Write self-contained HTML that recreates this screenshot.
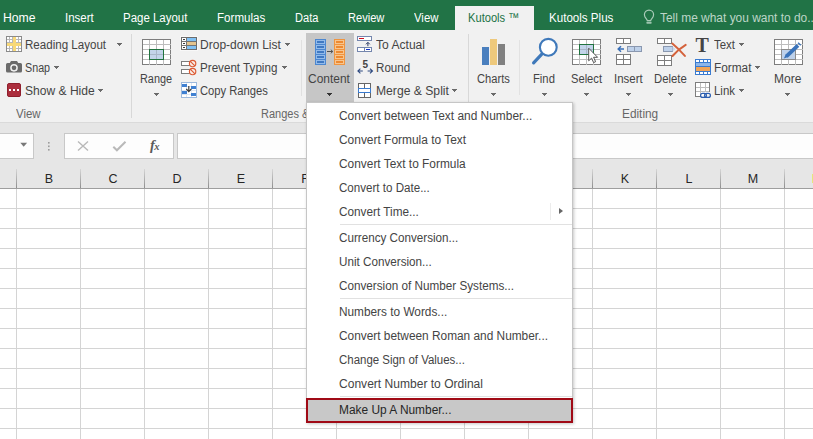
<!DOCTYPE html>
<html><head><meta charset="utf-8"><title>Kutools Content menu</title>
<style>
html,body{margin:0;padding:0;}
body{width:813px;height:439px;overflow:hidden;position:relative;background:#fff;font-family:"Liberation Sans",sans-serif;}
.a{position:absolute;}
.t{position:absolute;white-space:nowrap;transform-origin:0 50%;}
#tabs{left:0;top:0;width:813px;height:30px;background:#217346;}
#atab{left:455px;top:6px;width:79px;height:24px;background:#f1f1f1;}
#ribbon{left:0;top:30px;width:813px;height:92px;background:#f1f1f1;}
#band{left:0;top:123px;width:813px;height:66px;background:#e6e6e6;}
#rline{left:0;top:122px;width:813px;height:1px;background:#dadada;}
.box{background:#fdfdfd;border:1px solid #c8c8c8;box-sizing:border-box;top:133px;height:26px;}
.vs{width:1px;background:#d8d8d8;}
.hs{width:1px;background:linear-gradient(to bottom,#d6d6d6,#8e8e8e);top:169px;height:19px;}
#hline{left:0;top:188px;width:813px;height:1px;background:#9e9e9e;}
#grid{left:0;top:189px;width:813px;height:250px;background:#fff;
 background-image:linear-gradient(to right,#d4d4d4 1px,transparent 1px),linear-gradient(to bottom,#d4d4d4 1px,transparent 1px);
 background-size:64px 20px,64px 20px;background-position:16px 0,0 19px;}
.ar{width:0;height:0;border-left:2.5px solid transparent;border-right:2.5px solid transparent;border-top:3px solid #666;}
#pressed{left:306px;top:33px;width:48px;height:70px;background:#c6c6c6;}
#menu{left:306px;top:102px;width:267px;height:321px;background:#fff;border:1px solid #c6c6c6;border-bottom:none;box-sizing:border-box;box-shadow:1px 1px 3px rgba(0,0,0,.22);}
.ms{left:340px;width:232px;height:1px;background:#e1e1e1;}
#hl{left:306px;top:398px;width:267px;height:25px;background:#c8c8c8;border:2px solid #a00a16;box-sizing:border-box;}
</style></head><body>
<div class="a" id="tabs"></div>
<div class="a" id="atab"></div>
<div class="a" id="ribbon"></div>
<div class="a" id="rline"></div>
<div class="a" id="band"></div>
<div class="a" id="pressed"></div>
<!-- group separators -->
<div class="a vs" style="left:131px;top:34px;height:84px"></div>
<div class="a vs" style="left:301px;top:40px;height:56px;background:#e0e0e0"></div>
<div class="a vs" style="left:468px;top:34px;height:84px"></div>
<div class="a vs" style="left:519px;top:40px;height:55px;background:#e2e2e2"></div>
<!-- formula bar -->
<div class="a box" style="left:-2px;width:36px"></div>
<div class="a box" style="left:64px;width:110px"></div>
<div class="a box" style="left:177px;width:640px"></div>
<div class="a hs" style="left:16px"></div><div class="a hs" style="left:80px"></div><div class="a hs" style="left:144px"></div><div class="a hs" style="left:208px"></div><div class="a hs" style="left:272px"></div><div class="a hs" style="left:336px"></div><div class="a hs" style="left:400px"></div><div class="a hs" style="left:464px"></div><div class="a hs" style="left:528px"></div><div class="a hs" style="left:592px"></div><div class="a hs" style="left:656px"></div><div class="a hs" style="left:720px"></div><div class="a hs" style="left:784px"></div>
<div class="a" id="hline"></div>
<div class="a" style="left:812px;top:174px;width:1px;height:9px;background:#e6e67c"></div>
<div class="a" id="grid"></div>
<svg class="a" style="left:0;top:0" width="813" height="190" viewBox="0 0 813 190">
<defs>
<path id="dar" d="M0 0h5v1h-1v1h-1v1h-1v-1h-1v-1h-1z" fill="#6a6a6a" shape-rendering="crispEdges"/>
</defs>
<!-- lightbulb -->
<g fill="none" stroke="#a9cbb8" stroke-width="1.200">
<path d="M647.300 20.600c-.3-1.600-2.900-3.100-2.900-5.900a4.600 4.600 0 0 1 9.200 0c0 2.800-2.600 4.300-2.900 5.900z"/>
</g>
<rect x="646.400" y="21.700" width="5.200" height="2" rx=".6" fill="#9dc4ae"/>
<!-- Reading layout -->
<g shape-rendering="crispEdges">
<rect x="6.500" y="36.500" width="15" height="15" fill="#fff" stroke="#8a8a8a"/>
<path d="M9.500 37v14M12.500 37v14M15.500 37v14M18.500 37v14M7 39.500h14M7 42.500h14M7 45.500h14M7 48.500h14" stroke="#b8b8b8" fill="none"/>
<rect x="13" y="37" width="3" height="14" fill="#f8d978"/>
<rect x="7" y="43" width="14" height="3" fill="#f8d978"/>
</g>
<!-- camera -->
<path d="M7.500 63h2.300l1.200-2h6l1.200 2h2.300q1.500 0 1.500 1.500v6.500q0 1.500-1.500 1.500h-13q-1.500 0-1.500-1.500v-6.500q0-1.500 1.500-1.500z" fill="#6b6b6b"/>
<circle cx="14" cy="67.800" r="3.100" fill="#6b6b6b" stroke="#f1f1f1" stroke-width="1.500"/>
<!-- show hide -->
<rect x="7.500" y="83.500" width="13" height="13" rx="1.500" fill="#ab2e3d" stroke="#8f1f2d"/>
<g fill="#fff"><rect x="9" y="89" width="2" height="2"/><rect x="13" y="89" width="2" height="2"/><rect x="17" y="89" width="2" height="2"/></g>
<!-- Range icon -->
<g shape-rendering="crispEdges">
<rect x="142.500" y="39.500" width="28" height="25" fill="#fff" stroke="#7d7d7d"/>
<path d="M149.500 40v25M156.500 40v25M163.500 40v25M143 44.500h28M143 49.500h28M143 54.500h28M143 59.500h28" stroke="#bdbdbd" fill="none"/>
</g>
<g shape-rendering="crispEdges"><rect x="149.500" y="49.500" width="14" height="10" fill="#c3d4ea" stroke="#21733f"/>
<path d="M156.500 50v9M150 54.500h13" stroke="#a8b6c9" fill="none"/></g>
<!-- drop-down list -->
<g shape-rendering="crispEdges">
<rect x="180.500" y="36.500" width="17" height="14" fill="none" stroke="#f8f8f8"/>
<rect x="181.500" y="37.500" width="15" height="12" fill="#fff" stroke="#6c6c6c"/>
<rect x="187" y="38" width="9" height="3" fill="#80c1f5"/>
<rect x="187" y="42" width="9" height="3" fill="#e4c48e"/>
<rect x="187" y="46" width="9" height="3" fill="#80c1f5"/>
<path d="M186.500 38v11M182 41.500h14M182 45.500h14" stroke="#747474" fill="none"/>
<path d="M183 39.500h2M183 43.500h2M183 47.500h2" stroke="#3c3c3c" fill="none"/>
</g>
<!-- prevent typing -->
<g shape-rendering="crispEdges" fill="#fff" stroke="#7d7d7d">
<rect x="181.500" y="61.500" width="8" height="4"/>
<rect x="181.500" y="69.500" width="8" height="4"/>
</g>
<g fill="#f8ebe6" stroke="#dc5a33" stroke-width="1.150">
<circle cx="192.600" cy="63.600" r="3.200"/><circle cx="192.600" cy="71.500" r="3.200"/>
<path d="M190.300 61.300l4.600 4.600M190.300 69.200l4.600 4.600"/>
</g>
<!-- copy ranges -->
<g shape-rendering="crispEdges">
<rect x="181.500" y="82.500" width="15" height="15" fill="#fff" stroke="#9db9dc"/>
<path d="M182 86.500h14M182 90.500h14M182 94.500h14M186.500 83v14M191.500 83v14" stroke="#dfe6f0" fill="none"/>
<g fill="#3f80d2"><rect x="182" y="84" width="5" height="3"/><rect x="191" y="86" width="5" height="3"/><rect x="182" y="91" width="5" height="3"/><rect x="191" y="93" width="5" height="3"/></g>
</g>
<path d="M188.800 86v5.500M186.300 89l2.500 2.600 2.500-2.600" stroke="#3a3a3a" stroke-width="1.200" fill="none"/>
<!-- Content icon -->
<g shape-rendering="crispEdges">
<rect x="315" y="39" width="11" height="26" fill="#4c87d0"/>
<rect x="334" y="39" width="11" height="26" fill="#f0953f"/>
<g fill="#4079c2" stroke="#93bbea"><rect x="316.500" y="40.5" width="8" height="3"/><rect x="316.500" y="45.5" width="8" height="3"/><rect x="316.500" y="50.5" width="8" height="3"/><rect x="316.500" y="55.5" width="8" height="3"/><rect x="316.500" y="60.5" width="8" height="3"/></g>
<g fill="#ec8a33" stroke="#f8c58e"><rect x="335.500" y="40.5" width="8" height="3"/><rect x="335.500" y="45.5" width="8" height="3"/><rect x="335.500" y="50.5" width="8" height="3"/><rect x="335.500" y="55.5" width="8" height="3"/><rect x="335.500" y="60.5" width="8" height="3"/></g>
</g>
<path d="M327 51.500h5.500M330.800 49.700l2 1.800-2 1.800" stroke="#505050" fill="none" stroke-width="1"/>
<!-- To Actual -->
<g shape-rendering="crispEdges">
<rect x="357.500" y="36.500" width="14" height="4" fill="#fff" stroke="#7486ad"/>
<rect x="357.500" y="47.500" width="14" height="4" fill="#fff" stroke="#7486ad"/>
<path d="M364.500 48v4" stroke="#7486ad"/>
<path d="M359 38.500h5" stroke="#d01020"/>
<path d="M366 49.500h4" stroke="#1030c8"/>
</g>
<path d="M367.900 46.200v-3.600M366 44.300l1.900-2 1.900 2" stroke="#2c3c66" fill="none" stroke-width="1"/>
<!-- Round : arrows -->
<g stroke="#2f4a80" fill="none" stroke-width="1.100">
<path d="M358 71h4.800M360.400 68.600l-2.500 2.400 2.500 2.400"/>
<path d="M367.600 71h4.800M370 68.600l2.500 2.400-2.500 2.400"/>
</g>
<!-- Merge & split -->
<g shape-rendering="crispEdges">
<rect x="358.500" y="83.500" width="12" height="14" fill="#fff" stroke="#666"/>
<path d="M364.500 84v4M364.500 93v4" stroke="#666"/>
<rect x="358.500" y="88.500" width="12" height="4" fill="#fff" stroke="#3a7bd0"/>
</g>
<!-- Charts -->
<g shape-rendering="crispEdges">
<rect x="482" y="47" width="7" height="18" fill="#4a7fbe"/>
<rect x="490" y="39" width="7" height="26" fill="#eec97c"/>
<rect x="498" y="44" width="7" height="21" fill="#808080"/>
</g>
<!-- Find -->
<path d="M541.800 54.200L533.600 62.800" stroke="#3f79ba" stroke-width="3.200" stroke-linecap="round"/>
<circle cx="548.300" cy="47.300" r="8.400" fill="#fff" stroke="#3f79ba" stroke-width="2.100"/>
<!-- Select -->
<g shape-rendering="crispEdges">
<rect x="572.500" y="39.500" width="28" height="25" fill="#fff" stroke="#7d7d7d"/>
<path d="M579.500 40v25M586.500 40v25M593.500 40v25M573 44.500h28M573 49.500h28M573 54.500h28M573 59.500h28" stroke="#bdbdbd" fill="none"/>
</g>
<g shape-rendering="crispEdges"><rect x="579.500" y="44.500" width="14" height="10" fill="#c3d4ea" stroke="#21733f"/>
<path d="M586.500 45v9M580 49.500h13" stroke="#a8b6c9" fill="none"/></g>
<path d="M588.700 48.200v12.600l2.900-2.700 2 4.500 2-.9-2-4.400h4z" fill="#fff" stroke="#555" stroke-width="1" stroke-linejoin="round"/>
<!-- Insert -->
<g shape-rendering="crispEdges" fill="#fff" stroke="#7d7d7d">
<rect x="616.500" y="38.500" width="14" height="5"/>
<path d="M623.500 39v5"/>
<rect x="616.500" y="54.500" width="14" height="10"/>
<path d="M623.500 55v10M617 59.500h14"/>
<rect x="627.500" y="46.500" width="14" height="5" fill="#bed1ea" stroke="#8a98b0"/>
<path d="M634.500 47v5" stroke="#8a98b0"/>
</g>
<path d="M618.300 49h5.700M621 46.300l-2.800 2.700 2.800 2.700" stroke="#3a70b8" fill="none" stroke-width="1.500"/>
<!-- Delete -->
<g shape-rendering="crispEdges" fill="#fff" stroke="#7d7d7d">
<rect x="657.500" y="38.500" width="14" height="5"/>
<path d="M664.500 39v5"/>
<rect x="657.500" y="55.500" width="14" height="10"/>
<path d="M664.500 56v10M658 60.500h14"/>
<rect x="663.500" y="46.500" width="9" height="5" fill="#bed1ea" stroke="#8a98b0"/>
</g>
<path d="M672.500 46.500l3 2.500-3 2.500z" fill="#c9d8ec"/>
<path d="M672.300 43.600q6 5 12.600 12.300M685.700 44.900q-7.500 4.500-13.200 11.100" stroke="#d4623c" stroke-width="2" fill="none" stroke-linecap="round"/>
<!-- Format -->
<g shape-rendering="crispEdges">
<rect x="695.500" y="59.500" width="15" height="15" fill="#fff" stroke="#3a7bd0"/>
<rect x="696" y="63" width="14" height="4" fill="#8db6ea"/>
<rect x="696" y="67" width="14" height="4" fill="#f2a456"/>
<path d="M696 62.500h14M696 71.500h14M696 66.500h14" stroke="#3a7bd0" stroke-width="1" fill="none"/>
<path d="M699.500 60v2M703.500 60v2M707.500 60v2M699.500 72v2M703.500 72v2M707.500 72v2" stroke="#3a7bd0" fill="none"/>
</g>
<!-- Link -->
<g shape-rendering="crispEdges">
<path d="M709.500 92v-9.500h-14v14h5" fill="#fff" stroke="#7d7d7d"/>
<rect x="696" y="83" width="13" height="9" fill="#fff"/>
<rect x="696" y="92" width="4" height="4" fill="#fff"/>
<path d="M700.500 83v13M705.500 83v9M696 87.500h13M696 91.500h13" stroke="#bdbdbd" fill="none"/>
</g>
<g fill="none" stroke="#2a5db0" stroke-width="1.200">
<rect x="700.600" y="93.400" width="5.800" height="4" rx="2"/>
<rect x="704.600" y="93.400" width="5.800" height="4" rx="2"/>
</g>
<!-- More -->
<g shape-rendering="crispEdges">
<rect x="774.500" y="39.500" width="28" height="25" fill="#fff" stroke="#7d7d7d"/>
<path d="M781.500 40v25M788.500 40v25M795.500 40v25M775 44.500h28M775 49.500h28M775 54.500h28M775 59.500h28" stroke="#bdbdbd" fill="none"/>
<rect x="781.500" y="49.500" width="14" height="10" fill="#bed1ea" stroke="#8c8c8c"/>
</g>
<path d="M798 45.300L786.400 56.400" stroke="#3a73ba" stroke-width="3.800"/>
<path d="M799.900 43.500l-1 1" stroke="#3a73ba" stroke-width="3.800"/>
<path d="M785.700 54.500l-1.900 4 4.300-1.500z" fill="#3a73ba"/>
<!-- drop arrows -->
<use href="#dar" x="117" y="43"/>
<use href="#dar" x="54" y="66"/>
<use href="#dar" x="98" y="89"/>
<use href="#dar" x="285" y="43"/>
<use href="#dar" x="282" y="66"/>
<use href="#dar" x="452" y="89"/>
<use href="#dar" x="739" y="43"/>
<use href="#dar" x="755" y="66"/>
<use href="#dar" x="739" y="89"/>
<use href="#dar" x="154" y="93"/>
<path d="M327 93h5v1h-1v1h-1v1h-1v-1h-1v-1h-1z" fill="#333" shape-rendering="crispEdges"/>
<use href="#dar" x="491" y="93"/>
<use href="#dar" x="542" y="93"/>
<use href="#dar" x="584" y="93"/>
<use href="#dar" x="626" y="93"/>
<use href="#dar" x="668" y="93"/>
<use href="#dar" x="785" y="93"/>
<!-- name box arrow -->
<path d="M20.300 142.700h6.800l-3.400 4.100z" fill="#787878"/>
<!-- dots -->
<g fill="#9c9c9c"><rect x="48" y="142" width="1.600" height="1.600"/><rect x="48" y="145.500" width="1.600" height="1.600"/><rect x="48" y="149" width="1.600" height="1.600"/></g>
<!-- X, check -->
<path d="M78 141.500l10 9M88 141.500l-10 9" stroke="#b9b9b9" stroke-width="1.400" fill="none"/>
<path d="M113.300 146.800l3.600 3.500 8.600-8.600" stroke="#b9b9b9" stroke-width="2" fill="none"/>
</svg>

<span class="t" style="left:695.5px;top:34px;font-family:'Liberation Serif',serif;font-weight:bold;font-size:20px;line-height:22px;color:#444;">T</span>
<span class="t" style="left:362.6px;top:59px;font-weight:bold;font-size:10px;line-height:12px;color:#444;">5</span>
<span class="t" style="left:150px;top:137px;font-family:'Liberation Serif',serif;font-style:italic;font-weight:bold;font-size:14.5px;line-height:16px;color:#5a5a5a;letter-spacing:-0.5px">f<span style="font-size:10.5px">x</span></span>
<span class="t" id="t0" style="font-size:12.5px;line-height:16px;color:#fff;top:10.00px;left:3.30px;transform:scaleX(0.9777);">Home</span>
<span class="t" id="t1" style="font-size:12.5px;line-height:16px;color:#fff;top:10.00px;left:64.60px;transform:scaleX(0.9179);">Insert</span>
<span class="t" id="t2" style="font-size:12.5px;line-height:16px;color:#fff;top:10.00px;left:122.90px;transform:scaleX(0.9173);">Page Layout</span>
<span class="t" id="t3" style="font-size:12.5px;line-height:16px;color:#fff;top:10.00px;left:217.30px;transform:scaleX(0.9272);">Formulas</span>
<span class="t" id="t4" style="font-size:12.5px;line-height:16px;color:#fff;top:10.00px;left:294.90px;transform:scaleX(0.8862);">Data</span>
<span class="t" id="t5" style="font-size:12.5px;line-height:16px;color:#fff;top:10.00px;left:348.30px;transform:scaleX(0.8854);">Review</span>
<span class="t" id="t6" style="font-size:12.5px;line-height:16px;color:#fff;top:10.00px;left:413.90px;transform:scaleX(0.9079);">View</span>
<span class="t" id="t7" style="font-size:12.5px;line-height:16px;color:#217346;top:10.00px;left:467.90px;transform:scaleX(0.8912);">Kutools ™</span>
<span class="t" id="t8" style="font-size:12.5px;line-height:16px;color:#fff;top:10.00px;left:548.90px;transform:scaleX(0.9268);">Kutools Plus</span>
<span class="t" id="t9" style="font-size:12.5px;line-height:16px;color:#bdd6c8;top:10.00px;left:660.00px;transform:scaleX(0.9546);">Tell me what you want to do...</span>
<span class="t" id="t10" style="font-size:12.5px;line-height:16px;color:#444;top:37.00px;left:25.10px;transform:scaleX(0.9260);">Reading Layout</span>
<span class="t" id="t11" style="font-size:12.5px;line-height:16px;color:#444;top:60.00px;left:25.10px;transform:scaleX(0.8595);">Snap</span>
<span class="t" id="t12" style="font-size:12.5px;line-height:16px;color:#444;top:83.00px;left:25.10px;transform:scaleX(0.9645);">Show &amp; Hide</span>
<span class="t" id="t13" style="font-size:12.5px;line-height:16px;color:#444;top:37.00px;left:200.20px;transform:scaleX(0.9622);">Drop-down List</span>
<span class="t" id="t14" style="font-size:12.5px;line-height:16px;color:#444;top:60.00px;left:200.20px;transform:scaleX(0.9308);">Prevent Typing</span>
<span class="t" id="t15" style="font-size:12.5px;line-height:16px;color:#444;top:83.00px;left:200.20px;transform:scaleX(0.8964);">Copy Ranges</span>
<span class="t" id="t16" style="font-size:12.5px;line-height:16px;color:#444;top:37.00px;left:375.90px;transform:scaleX(0.9658);">To Actual</span>
<span class="t" id="t17" style="font-size:12.5px;line-height:16px;color:#444;top:60.00px;left:375.90px;transform:scaleX(0.9282);">Round</span>
<span class="t" id="t18" style="font-size:12.5px;line-height:16px;color:#444;top:83.00px;left:375.90px;transform:scaleX(0.9716);">Merge &amp; Split</span>
<span class="t" id="t19" style="font-size:12.5px;line-height:16px;color:#444;top:37.00px;left:714.10px;transform:scaleX(0.9155);">Text</span>
<span class="t" id="t20" style="font-size:12.5px;line-height:16px;color:#444;top:60.00px;left:714.10px;transform:scaleX(0.9471);">Format</span>
<span class="t" id="t21" style="font-size:12.5px;line-height:16px;color:#444;top:83.00px;left:714.10px;transform:scaleX(0.9155);">Link</span>
<span class="t" id="t22" style="font-size:12.5px;line-height:16px;color:#444;top:71.00px;left:140.30px;transform:scaleX(0.8712);">Range</span>
<span class="t" id="t23" style="font-size:12.5px;line-height:16px;color:#444;top:71.00px;left:308.30px;transform:scaleX(0.9570);">Content</span>
<span class="t" id="t24" style="font-size:12.5px;line-height:16px;color:#444;top:71.00px;left:477.40px;transform:scaleX(0.8906);">Charts</span>
<span class="t" id="t25" style="font-size:12.5px;line-height:16px;color:#444;top:71.00px;left:532.90px;transform:scaleX(0.9002);">Find</span>
<span class="t" id="t26" style="font-size:12.5px;line-height:16px;color:#444;top:71.00px;left:570.90px;transform:scaleX(0.8921);">Select</span>
<span class="t" id="t27" style="font-size:12.5px;line-height:16px;color:#444;top:71.00px;left:613.90px;transform:scaleX(0.9179);">Insert</span>
<span class="t" id="t28" style="font-size:12.5px;line-height:16px;color:#444;top:71.00px;left:653.80px;transform:scaleX(0.9076);">Delete</span>
<span class="t" id="t29" style="font-size:12.5px;line-height:16px;color:#444;top:71.00px;left:774.30px;transform:scaleX(0.9584);">More</span>
<span class="t" id="t30" style="font-size:12.5px;line-height:16px;color:#666;top:106.00px;left:16.00px;transform:scaleX(0.9153);">View</span>
<span class="t" id="t31" style="font-size:12.5px;line-height:16px;color:#666;top:106.00px;left:261.10px;transform:scaleX(0.8821);">Ranges &amp; Cells</span>
<span class="t" id="t32" style="font-size:12.5px;line-height:16px;color:#666;top:106.00px;left:622.20px;transform:scaleX(0.9468);">Editing</span>
<span class="t" id="t33" style="font-size:12.5px;line-height:16px;color:#262626;top:171.00px;left:29.00px;width:40px;text-align:center;">B</span>
<span class="t" id="t34" style="font-size:12.5px;line-height:16px;color:#262626;top:171.00px;left:93.00px;width:40px;text-align:center;">C</span>
<span class="t" id="t35" style="font-size:12.5px;line-height:16px;color:#262626;top:171.00px;left:157.00px;width:40px;text-align:center;">D</span>
<span class="t" id="t36" style="font-size:12.5px;line-height:16px;color:#262626;top:171.00px;left:221.00px;width:40px;text-align:center;">E</span>
<span class="t" id="t37" style="font-size:12.5px;line-height:16px;color:#262626;top:171.00px;left:285.00px;width:40px;text-align:center;">F</span>
<span class="t" id="t38" style="font-size:12.5px;line-height:16px;color:#262626;top:171.00px;left:349.00px;width:40px;text-align:center;">G</span>
<span class="t" id="t39" style="font-size:12.5px;line-height:16px;color:#262626;top:171.00px;left:413.00px;width:40px;text-align:center;">H</span>
<span class="t" id="t40" style="font-size:12.5px;line-height:16px;color:#262626;top:171.00px;left:477.00px;width:40px;text-align:center;">I</span>
<span class="t" id="t41" style="font-size:12.5px;line-height:16px;color:#262626;top:171.00px;left:541.00px;width:40px;text-align:center;">J</span>
<span class="t" id="t42" style="font-size:12.5px;line-height:16px;color:#262626;top:171.00px;left:605.00px;width:40px;text-align:center;">K</span>
<span class="t" id="t43" style="font-size:12.5px;line-height:16px;color:#262626;top:171.00px;left:669.00px;width:40px;text-align:center;">L</span>
<span class="t" id="t44" style="font-size:12.5px;line-height:16px;color:#262626;top:171.00px;left:733.00px;width:40px;text-align:center;">M</span>
<div class="a" id="menu"></div>
<div class="a ms" style="top:224px"></div>
<div class="a ms" style="top:298px"></div>
<div class="a ms" style="top:396px"></div>
<div class="a" style="left:550px;top:203px;width:1px;height:17px;background:#ececec"></div>
<div class="a" style="left:559px;top:208px;width:0;height:0;border-top:3.5px solid transparent;border-bottom:3.5px solid transparent;border-left:4px solid #666"></div>
<div class="a" id="hl"></div>
<span class="t" id="t45" style="font-size:12px;line-height:16px;color:#444;top:108.00px;left:339.30px;transform:scaleX(0.9935);">Convert between Text and Number...</span>
<span class="t" id="t46" style="font-size:12px;line-height:16px;color:#444;top:132.00px;left:339.30px;transform:scaleX(0.9943);">Convert Formula to Text</span>
<span class="t" id="t47" style="font-size:12px;line-height:16px;color:#444;top:156.00px;left:339.30px;transform:scaleX(0.9912);">Convert Text to Formula</span>
<span class="t" id="t48" style="font-size:12px;line-height:16px;color:#444;top:180.00px;left:339.30px;transform:scaleX(0.9655);">Convert to Date...</span>
<span class="t" id="t49" style="font-size:12px;line-height:16px;color:#444;top:204.00px;left:339.30px;transform:scaleX(0.9808);">Convert Time...</span>
<span class="t" id="t50" style="font-size:12px;line-height:16px;color:#444;top:230.00px;left:339.30px;transform:scaleX(0.9721);">Currency Conversion...</span>
<span class="t" id="t51" style="font-size:12px;line-height:16px;color:#444;top:254.00px;left:339.30px;transform:scaleX(0.9730);">Unit Conversion...</span>
<span class="t" id="t52" style="font-size:12px;line-height:16px;color:#444;top:278.00px;left:339.30px;transform:scaleX(0.9760);">Conversion of Number Systems...</span>
<span class="t" id="t53" style="font-size:12px;line-height:16px;color:#444;top:304.00px;left:339.30px;transform:scaleX(0.9853);">Numbers to Words...</span>
<span class="t" id="t54" style="font-size:12px;line-height:16px;color:#444;top:328.00px;left:339.30px;transform:scaleX(0.9884);">Convert between Roman and Number...</span>
<span class="t" id="t55" style="font-size:12px;line-height:16px;color:#444;top:352.00px;left:339.30px;transform:scaleX(0.9547);">Change Sign of Values...</span>
<span class="t" id="t56" style="font-size:12px;line-height:16px;color:#444;top:376.00px;left:339.30px;transform:scaleX(1.0042);">Convert Number to Ordinal</span>
<span class="t" id="t57" style="font-size:12px;line-height:16px;color:#262626;top:402.00px;left:339.30px;transform:scaleX(0.9921);">Make Up A Number...</span>
</body></html>
